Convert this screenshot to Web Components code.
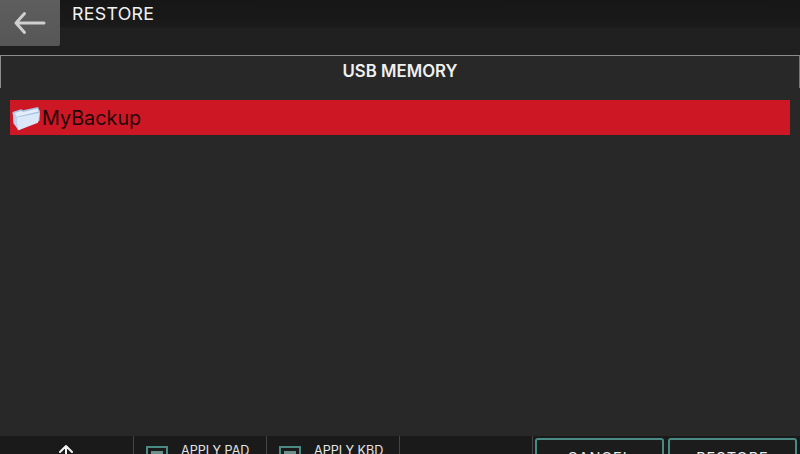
<!DOCTYPE html>
<html>
<head>
<meta charset="utf-8">
<title>Restore</title>
<style>
  html, body { margin: 0; height: 100%; background: #282828; overflow: hidden; }
  body { font-family: "Inter", "Liberation Sans", sans-serif; }
</style>
</head>
<body>
<restore-screen>
  <title-bar slot="top" label="RESTORE"></title-bar>
  <tab-header slot="top">USB MEMORY</tab-header>
  <file-row selected>MyBackup</file-row>
  <foot-bar slot="bottom">
    <foot-cell><up-icon></up-icon></foot-cell>
    <foot-cell><check-box>APPLY PAD</check-box></foot-cell>
    <foot-cell><check-box>APPLY KBD</check-box></foot-cell>
    <foot-cell></foot-cell>
    <foot-button>CANCEL</foot-button>
    <foot-button>RESTORE</foot-button>
  </foot-bar>
</restore-screen>

<script>
class RestoreScreen extends HTMLElement {
  constructor() {
    super();
    this.attachShadow({ mode: 'open' });
    this.shadowRoot.innerHTML = `
      <style>
        :host {
          display: flex;
          flex-direction: column;
          width: 800px;
          height: 454px;
          overflow: hidden;
          background: #282828;
        }
        #list {
          flex: 1;
          min-height: 0;
          padding: 12px 10px 0;
        }
      </style>
      <slot name="top"></slot>
      <div id="list"><slot></slot></div>
      <slot name="bottom"></slot>
    `;
  }
}

class TitleBar extends HTMLElement {
  constructor() {
    super();
    this.attachShadow({ mode: 'open' });
    this.shadowRoot.innerHTML = `
      <style>
        :host {
          display: flex;
          height: 55px;
          flex: none;
          background: linear-gradient(#161616 0, #1a1a1a 27px, #202020 28px, #1f1f1f 100%);
        }
        #back {
          width: 60px;
          height: 46px;
          display: flex;
          align-items: center;
          justify-content: center;
          background: linear-gradient(#5e5e5e, #565656);
          border-radius: 0 0 2px 0;
        }
        #label {
          padding: 4px 0 0 12px;
          color: #f2f2f2;
          font-size: 17.8px;
          line-height: 20px;
          letter-spacing: .3px;
        }
      </style>
      <div id="back">
        <svg width="34" height="24" viewBox="0 0 34 24" fill="none" stroke="#cfcfcf" stroke-width="3" stroke-linecap="round" stroke-linejoin="round">
          <path d="M3 12h28M11.500 2.500 3 12l8.500 9.500"/>
        </svg>
      </div>
      <div id="label"></div>
    `;
    this.shadowRoot.querySelector('#label').textContent = this.getAttribute('label');
  }
}

class TabHeader extends HTMLElement {
  constructor() {
    super();
    this.attachShadow({ mode: 'open' });
    this.shadowRoot.innerHTML = `
      <style>
        :host {
          display: block;
          flex: none;
          height: 33px;
          box-sizing: border-box;
          border: 1px solid #8c8c8c;
          border-bottom: 0;
          border-right-color: #777;
          color: #f0f0f0;
          font-size: 16.8px;
          font-weight: 600;
          line-height: 30px;
          text-align: center;
        }
      </style>
      <slot></slot>
    `;
  }
}

class FileRow extends HTMLElement {
  constructor() {
    super();
    this.attachShadow({ mode: 'open' });
    this.shadowRoot.innerHTML = `
      <style>
        :host {
          display: flex;
          align-items: center;
          height: 35px;
          padding-left: 2px;
          color: #1d0508;
          font-size: 19.8px;
        }
        :host([selected]) { background: #cd1725; }
        svg { flex: none; display: block; margin-top: 1px; }
      </style>
      <svg width="30" height="25" viewBox="0 0 30 27" preserveAspectRatio="none">
        <path d="M.5 6.500 9 3.500l2 1L26 1l2 5-.5 10L7 26 2 19z" fill="#a8c4e4"/>
        <path d="M2.500 7.500 9 5.500l2 1L25.500 3l1 3L4.500 11.500z" fill="#e4eefa"/>
        <path d="M4.500 12.500 27.500 7.500 26 18 7 26c-.8.300-1.200 0-1.400-.8z" fill="#dbe8f7"/>
        <path d="M.8 7 4.500 12.500l1.200 12.700L1.500 18.500z" fill="#bdd4ee"/>
      </svg>
      <span><slot></slot></span>
    `;
  }
}

class FootBar extends HTMLElement {
  constructor() {
    super();
    this.attachShadow({ mode: 'open' });
    this.shadowRoot.innerHTML = `
      <style>
        :host {
          display: flex;
          flex: none;
          height: 18px;
          padding-left: 1px;
          overflow: hidden;
          background: #1a1a1a;
        }
      </style>
      <slot></slot>
    `;
  }
}

class FootCell extends HTMLElement {
  constructor() {
    super();
    this.attachShadow({ mode: 'open' });
    this.shadowRoot.innerHTML = `
      <style>
        :host {
          display: flex;
          justify-content: center;
          flex: none;
          width: 133px;
          height: 60px;
          box-sizing: border-box;
          border-right: 1px solid #454545;
        }
      </style>
      <slot></slot>
    `;
  }
}

class UpIcon extends HTMLElement {
  constructor() {
    super();
    this.attachShadow({ mode: 'open' });
    this.shadowRoot.innerHTML = `
      <style>
        :host { display: block; padding-top: 8px; margin-left: -2px; }
        svg { display: block; }
      </style>
      <svg width="16" height="30" viewBox="0 0 16 30" fill="none" stroke="#f4f4f4" stroke-width="2" stroke-linecap="round" stroke-linejoin="round">
        <path d="M8 2v26M2 8l6-6 6 6"/>
      </svg>
    `;
  }
}

class CheckBox extends HTMLElement {
  constructor() {
    super();
    this.attachShadow({ mode: 'open' });
    this.shadowRoot.innerHTML = `
      <style>
        :host {
          display: flex;
          width: 100%;
          box-sizing: border-box;
          padding: 10px 0 0 12px;
          color: #e6e6e6;
          font-size: 12.6px;
          line-height: 14px;
        }
        #box {
          flex: none;
          width: 22px;
          height: 22px;
          box-sizing: border-box;
          border: 2px solid #4a8a84;
          display: flex;
          align-items: center;
          justify-content: center;
        }
        #box::after { content: ""; width: 12px; height: 12px; background: #6a8f8c; }
        #text { padding-left: 13px; margin-top: -2px; white-space: nowrap; }
      </style>
      <div id="box"></div>
      <div id="text"><slot></slot></div>
    `;
  }
}

class FootButton extends HTMLElement {
  constructor() {
    super();
    this.attachShadow({ mode: 'open' });
    this.shadowRoot.innerHTML = `
      <style>
        :host {
          display: block;
          flex: none;
          width: 129px;
          height: 50px;
          margin: 2px 0 0 4px;
          box-sizing: border-box;
          border: 2px solid #4a8a84;
          border-radius: 3px;
          background: #1c1c1c;
          color: #ececec;
          font-size: 14.5px;
          letter-spacing: 1px;
          line-height: 20px;
          padding-top: 8px;
          text-align: center;
        }
        :host(:nth-child(5)) { margin-left: 2px; }
      </style>
      <slot></slot>
    `;
  }
}

customElements.define('restore-screen', RestoreScreen);
customElements.define('title-bar', TitleBar);
customElements.define('tab-header', TabHeader);
customElements.define('file-row', FileRow);
customElements.define('foot-bar', FootBar);
customElements.define('foot-cell', FootCell);
customElements.define('up-icon', UpIcon);
customElements.define('check-box', CheckBox);
customElements.define('foot-button', FootButton);
</script>
</body>
</html>
